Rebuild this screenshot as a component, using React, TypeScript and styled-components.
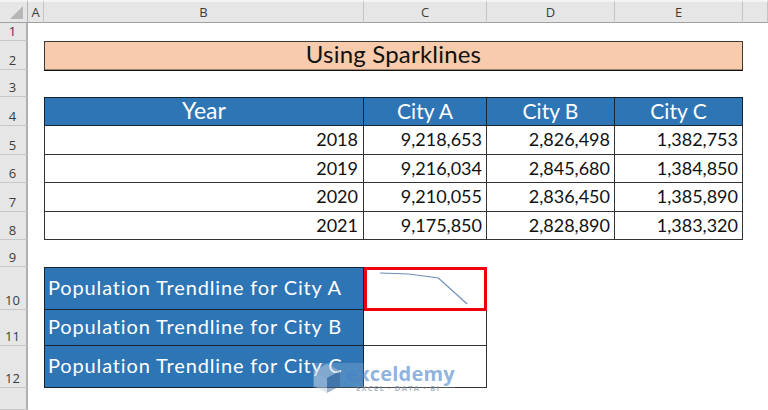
import React from "react";
import styled, { createGlobalStyle } from "styled-components";

const Global = createGlobalStyle`
  html, body { margin: 0; padding: 0; background: #fff; overflow: hidden; }
`;

const Sheet = styled.div`
  position: relative;
  width: 768px;
  height: 410px;
  overflow: hidden;
  display: grid;
  grid-template-columns: 28px 16px 320px 123px 128px 128px 25px;
  grid-template-rows: 23px 18px 29px 27px 29px 29px 28px 29px 28px 27px 43px 36px 42px 22px;
  font-family: "Lato", "Open Sans", sans-serif;
  background: #fff;
`;

const Corner = styled.div`
  background: #e6e6e6;
  border-top: 2px solid #f4f4f4;
  border-bottom: 1px solid #a0a0a0;
  border-right: 1px solid #b4b4b4;
  box-sizing: border-box;
  display: flex;
  align-items: flex-end;
  justify-content: flex-end;
  padding: 0 4px 3px 0;
`;

const ColHead = styled.div`
  background: #e6e6e6;
  border-top: 2px solid #f4f4f4;
  border-bottom: 1px solid #a0a0a0;
  border-right: 1px solid #c4c4c4;
  box-sizing: border-box;
  display: flex;
  align-items: center;
  justify-content: center;
  font: 13px "Open Sans", sans-serif;
  color: #3c3c3c;
`;

const RowHead = styled.div`
  background: #e6e6e6;
  border-bottom: 1px solid #c8c8c8;
  border-right: 2px solid #b0b0b0;
  box-sizing: border-box;
  display: flex;
  align-items: flex-end;
  justify-content: center;
  padding-right: 1px;
  padding-bottom: 1px;
  font: 13px/16px "Open Sans", sans-serif;
  color: #3c3c3c;
`;

const TailHead = styled(RowHead)`
  grid-column: 1;
`;

const Title = styled.div`
  grid-column: 3 / span 4;
  background: #f7cbac;
  border: 1px solid #3a3a3a;
  border-bottom: none;
  box-shadow: inset 0 -1px 0 #a08472, 0 1px 0 #111;
  box-sizing: border-box;
  display: flex;
  align-items: center;
  justify-content: center;
  font-size: 24px;
  letter-spacing: 0.2px;
  color: #111;
  height: 29px;
  padding-bottom: 6px;
`;

const Blank = styled.div<{ $span?: number }>`
  grid-column: span ${(p) => p.$span ?? 1};
`;

const BlueCell = styled.div`
  background: #2e75b6;
  color: #fff;
  border-top: 1px solid #16222e;
  border-right: 1px solid #1a2530;
  border-bottom: 1px solid #1a2530;
  box-sizing: border-box;
  display: flex;
  align-items: center;
  justify-content: center;
  font-size: 21px;
  padding-bottom: 3px;
`;

const YearHead = styled(BlueCell)`
  border-left: 1px solid #16222e;
  font-size: 23px;
`;

const DataCell = styled.div<{ $first?: boolean }>`
  background: #fff;
  color: #111;
  border-right: 1px solid #333;
  border-bottom: 1px solid #333;
  border-left: ${(p) => (p.$first ? "1px solid #333" : "none")};
  box-sizing: border-box;
  display: flex;
  align-items: center;
  justify-content: flex-end;
  padding-right: ${(p) => (p.$first ? "5px" : "4px")};
  padding-bottom: 2px;
  font-size: 18px;
`;

const LabelCell = styled.div`
  background: #2e75b6;
  color: #fff;
  border: 1px solid #16222e;
  border-top: none;
  box-sizing: border-box;
  display: flex;
  align-items: center;
  padding-left: 3px;
  padding-bottom: 4px;
  font-size: 20px;
  white-space: nowrap;
  letter-spacing: 0.85px;
`;

const TopLabel = styled(LabelCell)`
  border-top: 1px solid #16222e;
`;

const EmptyCell = styled.div`
  background: #fff;
  border-right: 1px solid #333;
  border-bottom: 1px solid #333;
  box-sizing: border-box;
`;

const SparkCell = styled.div`
  background: #fff;
  border: 3px solid #f0000f;
  margin-bottom: -1px;
  box-sizing: border-box;
  position: relative;
  z-index: 2;
`;

const SparkSvg = styled.svg`
  display: block;
  width: 100%;
  height: 100%;
`;

const Mark = styled.div`
  position: absolute;
  left: 313px;
  top: 363px;
  width: 142px;
  height: 31px;
  display: flex;
  align-items: flex-start;
  gap: 5px;
  background: rgba(255, 255, 255, 0.16);
  z-index: 3;
`;

const MarkText = styled.div`
  display: flex;
  flex-direction: column;
  align-items: flex-start;
`;

const MarkName = styled.span`
  font: 700 20px/21px "Open Sans", sans-serif;
  color: rgba(70, 130, 200, 0.62);
  letter-spacing: 0.2px;
`;

const MarkTag = styled.span`
  font: 700 7.5px/9px "Open Sans", sans-serif;
  color: rgba(130, 150, 170, 0.7);
  letter-spacing: 1.3px;
  padding-left: 10px;
  white-space: nowrap;
`;

const years = [
  ["2018", "9,218,653", "2,826,498", "1,382,753"],
  ["2019", "9,216,034", "2,845,680", "1,384,850"],
  ["2020", "9,210,055", "2,836,450", "1,385,890"],
  ["2021", "9,175,850", "2,828,890", "1,383,320"],
];

export default function App() {
  return (
    <Sheet>
      <Global />
      <Corner>
        <svg width="13" height="13" viewBox="0 0 13 13">
          <polygon points="0,13 13,0 13,13" fill="#b6b6b6" />
        </svg>
      </Corner>
      <ColHead>A</ColHead>
      <ColHead>B</ColHead>
      <ColHead>C</ColHead>
      <ColHead>D</ColHead>
      <ColHead>E</ColHead>
      <ColHead />

      <RowHead>1</RowHead>
      <Blank $span={6} />

      <RowHead>2</RowHead>
      <Blank />
      <Title>Using Sparklines</Title>
      <Blank />

      <RowHead>3</RowHead>
      <Blank $span={6} />

      <RowHead>4</RowHead>
      <Blank />
      <YearHead>Year</YearHead>
      <BlueCell>City A</BlueCell>
      <BlueCell>City B</BlueCell>
      <BlueCell>City C</BlueCell>
      <Blank />

      {years.map((row, i) => (
        <React.Fragment key={row[0]}>
          <RowHead>{i + 5}</RowHead>
          <Blank />
          {row.map((v, j) => (
            <DataCell key={v} $first={j === 0}>{v}</DataCell>
          ))}
          <Blank />
        </React.Fragment>
      ))}

      <RowHead>9</RowHead>
      <Blank $span={6} />

      <RowHead>10</RowHead>
      <Blank />
      <TopLabel>Population Trendline for City A</TopLabel>
      <SparkCell>
        <SparkSvg viewBox="0 0 118 38" preserveAspectRatio="none">
          <polyline
            points="13,3 42,4 72,8 101,34"
            fill="none"
            stroke="#6f8fb8"
            strokeWidth="1.2"
          />
        </SparkSvg>
      </SparkCell>
      <Blank $span={3} />

      <RowHead>11</RowHead>
      <Blank />
      <LabelCell>Population Trendline for City B</LabelCell>
      <EmptyCell />
      <Blank $span={3} />

      <RowHead>12</RowHead>
      <Blank />
      <LabelCell>Population Trendline for City C</LabelCell>
      <EmptyCell />
      <Blank $span={3} />

      <TailHead />
      <Blank $span={6} />

      <Mark>
        <svg width="28" height="31" viewBox="0 0 28 31">
          <polygon points="14,1 27,8 14,15 1,8" fill="rgba(190,205,225,0.45)" />
          <polygon points="1,8 14,15 14,30 1,23" fill="rgba(190,205,225,0.5)" />
          <polygon points="27,8 14,15 14,30 27,23" fill="rgba(50,90,140,0.45)" />
        </svg>
        <MarkText>
          <MarkName>exceldemy</MarkName>
          <MarkTag>EXCEL · DATA · BI</MarkTag>
        </MarkText>
      </Mark>
    </Sheet>
  );
}
